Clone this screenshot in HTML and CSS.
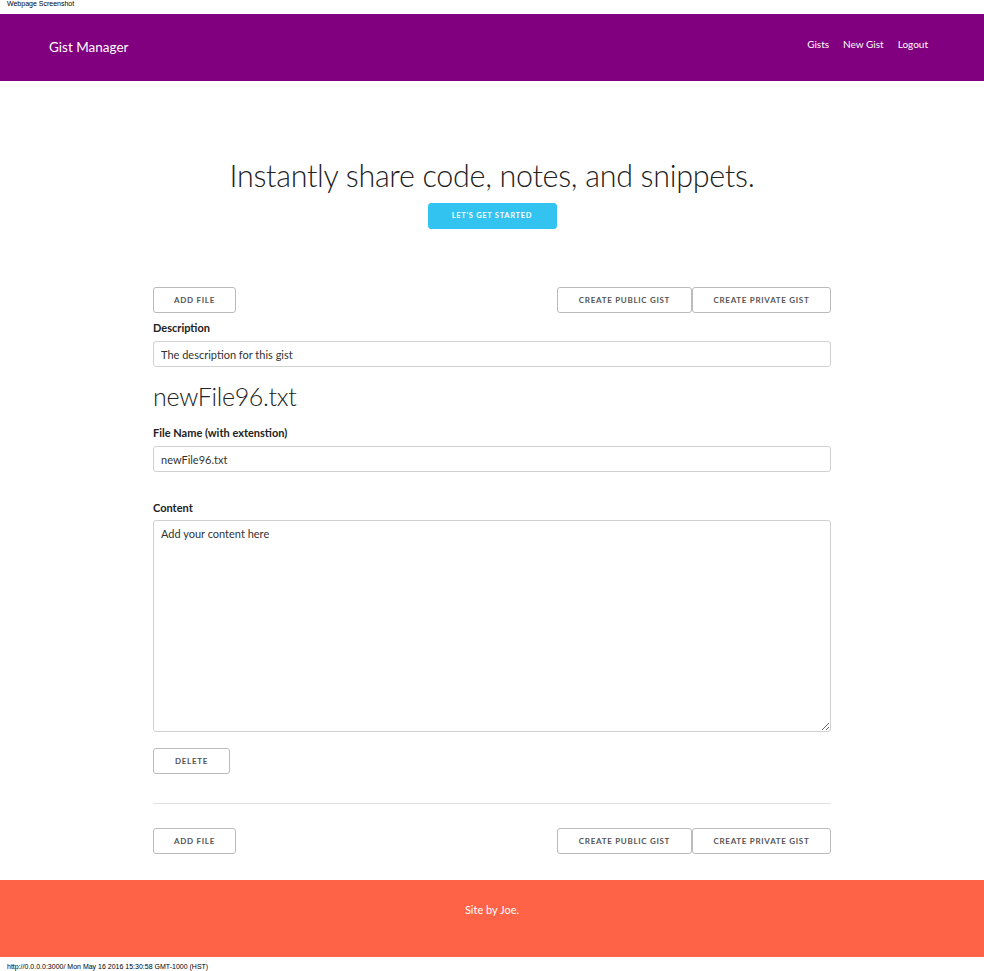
FILE: index.html
```html
<!DOCTYPE html>
<html lang="en">
<head>
<meta charset="utf-8">
<title>Gist Manager</title>
<link rel="stylesheet" href="styles.css">
</head>
<body>
<div class="print-head">Webpage Screenshot</div>
<nav class="nav">
  <a class="brand" href="#">Gist Manager</a>
  <div class="nav-links">
    <a href="#">Gists</a>
    <a href="#">New Gist</a>
    <a href="#">Logout</a>
  </div>
</nav>
<main class="main">
  <section class="hero">
    <h1 class="hero-title">Instantly share code, notes, and snippets.</h1>
    <button class="btn btn-primary">Let's get started</button>
  </section>
  <form class="gist-form">
    <div class="actions">
      <button type="button" class="btn btn-add">Add file</button>
      <div class="btn-group">
        <button type="button" class="btn btn-public">Create public gist</button>
        <button type="button" class="btn btn-private">Create private gist</button>
      </div>
    </div>
    <label class="label label-desc">Description</label>
    <input class="field" type="text" value="The description for this gist">
    <h2 class="file-title">newFile96.txt</h2>
    <label class="label label-name">File Name (with extenstion)</label>
    <input class="field" type="text" value="newFile96.txt">
    <label class="label label-content">Content</label>
    <textarea class="field area">Add your content here</textarea>
    <button type="button" class="btn btn-delete">Delete</button>
    <hr class="rule">
    <div class="actions">
      <button type="button" class="btn btn-add">Add file</button>
      <div class="btn-group">
        <button type="button" class="btn btn-public">Create public gist</button>
        <button type="button" class="btn btn-private">Create private gist</button>
      </div>
    </div>
  </form>
</main>
<footer class="footer">Site by Joe.</footer>
<div class="print-foot">http://0.0.0.0:3000/ Mon May 16 2016 15:30:58 GMT-1000 (HST)</div>
</body>
</html>
```
FILE: styles.css
```css
* { box-sizing: border-box; }
body {
  margin: 0;
  font-family: Lato, "Open Sans", sans-serif;
  color: #222;
  background: #fff;
}
.print-head {
  height: 14px;
  padding: 0 0 0 7px;
  font: 7px/7px "Liberation Sans", Arial, sans-serif;
  color: #000;
}
.print-foot {
  height: 14px;
  padding: 6px 0 0 7px;
  font: 7px/8px "Liberation Sans", Arial, sans-serif;
  color: #000;
}
.nav {
  background: #800080;
  height: 67px;
  display: flex;
  justify-content: space-between;
  align-items: flex-start;
  padding: 0 56px 0 49px;
}
.nav a {
  color: #fff;
  text-decoration: none;
}
.brand {
  font-size: 13.5px;
  line-height: 16px;
  margin-top: 25px;
}
.nav-links {
  display: flex;
  gap: 14px;
  margin-top: 23px;
  font-size: 10px;
  line-height: 14px;
}
.main {
  width: 678px;
  margin: 0 auto;
}
.hero {
  text-align: center;
  padding-top: 76px;
}
.hero-title {
  margin: 0;
  font-weight: 300;
  font-size: 30.5px;
  line-height: 36px;
  letter-spacing: -0.3px;
  color: #222;
}
.btn {
  display: inline-block;
  height: 26px;
  padding: 0 10px;
  border: 1px solid #bbb;
  border-radius: 3px;
  background: transparent;
  color: #555;
  font-family: Lato, "Open Sans", sans-serif;
  font-weight: 700;
  font-size: 8px;
  letter-spacing: 0.7px;
  text-transform: uppercase;
  line-height: 24px;
  cursor: pointer;
  white-space: nowrap;
}
.btn-primary {
  margin-top: 10px;
  width: 129px;
  font-size: 7.5px;
  background: #33C3F0;
  border-color: #33C3F0;
  color: #fff;
}
.gist-form {
  padding-top: 58px;
}
.actions {
  display: flex;
  justify-content: space-between;
}
.btn-add { width: 83px; }
.btn-public { width: 135px; }
.btn-private { width: 139px; }
.btn-delete { width: 77px; margin-top: 16px; }
.btn-group { display: flex; }
.label {
  display: block;
  font-weight: 700;
  font-size: 11px;
  line-height: 14px;
  color: #222;
}
.label-desc { margin-top: 8px; margin-bottom: 6px; }
.label-name { margin-top: 15px; margin-bottom: 6px; }
.label-content { margin-top: 29px; margin-bottom: 5px; }
.field {
  display: block;
  width: 100%;
  height: 26px;
  padding: 0 7px;
  border: 1px solid #D1D1D1;
  border-radius: 3px;
  background: #fff;
  font-family: Lato, "Open Sans", sans-serif;
  font-size: 11px;
  color: #333;
  outline: none;
}
.area {
  height: 212px;
  padding: 6px 7px;
  line-height: 14px;
  resize: vertical;
}
.file-title {
  margin: 14px 0 0;
  font-weight: 300;
  font-size: 25px;
  line-height: 30px;
  letter-spacing: -0.3px;
  color: #222;
}
.rule {
  margin: 29px 0 24px;
  border: 0;
  border-top: 1px solid #E1E1E1;
}
.footer {
  margin-top: 26px;
  height: 77px;
  background: #FF6347;
  color: #fff;
  text-align: center;
  font-size: 11px;
  line-height: 14px;
  padding-top: 23px;
}
```
